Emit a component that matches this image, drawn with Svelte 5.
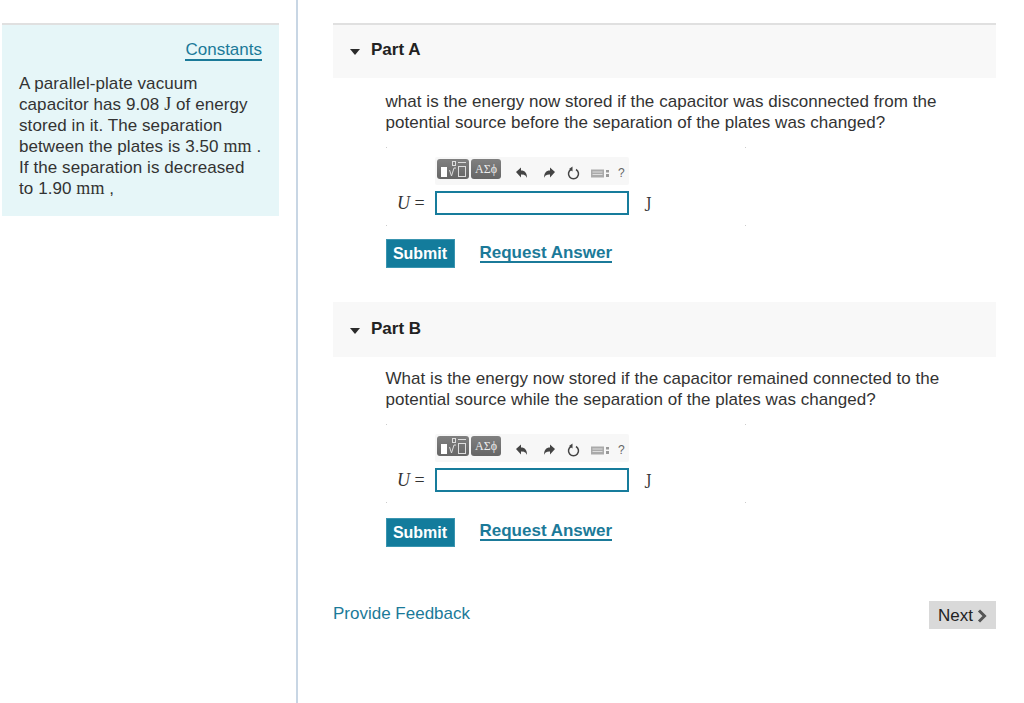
<script lang="ts">
	const parts = [
		{
			id: 'a',
			name: 'Part A',
			question: ['what is the energy now stored if the capacitor was disconnected from the', 'potential source before the separation of the plates was changed?'],
		},
		{
			id: 'b',
			name: 'Part B',
			question: ['What is the energy now stored if the capacitor remained connected to the', 'potential source while the separation of the plates was changed?'],
		},
	];
</script>

<div class="page">
	<aside class="side">
		<div class="info">
			<div class="constants"><a href="#c">Constants</a></div>
			<p class="intro">
				A parallel-plate vacuum<br />
				capacitor has 9.08 <span class="m">J</span> of energy<br />
				stored in it. The separation<br />
				between the plates is 3.50 <span class="m">mm</span> .<br />
				If the separation is decreased<br />
				to 1.90 <span class="m">mm</span> ,
			</p>
		</div>
	</aside>

	<main class="main">
		{#each parts as part}
			<section class="part part-{part.id}">
				<div class="part-head">
					<svg class="caret" width="10" height="6" viewBox="0 0 10 6"><path d="M0 0h10L5 6z" fill="#2b2b2b" /></svg>
					<span>{part.name}</span>
				</div>
				<div class="part-body">
					<p class="question">{part.question[0]}<br />{part.question[1]}</p>
					<div class="answer">
						<i class="dot tl"></i><i class="dot tr"></i><i class="dot bl"></i><i class="dot br"></i>
						<div class="toolbar">
							<span class="tool tool-tpl">
								<svg width="32" height="20" viewBox="0 0 32 20" fill="none">
									<rect x="4" y="8" width="6" height="10" fill="#fff" />
									<rect x="15.500" y="2.500" width="3" height="4" stroke="#ddd" />
									<path d="M12.500 11l2 6 2.500-8h2" stroke="#ddd" />
									<path d="M21 3.500h8" stroke="#ddd" />
									<rect x="21.500" y="7.500" width="7" height="10" stroke="#ddd" />
								</svg>
							</span>
							<span class="tool tool-sym">ΑΣϕ</span>
							<div class="actions">
								<svg class="undo" width="12" height="12" viewBox="0 0 12 12"><path d="M0 5l5-4.500v3c4 0 6 2.500 6 7.500-1.200-3-3-3.500-6-3.500v3z" fill="#444" /></svg>
								<svg class="redo" width="12" height="12" viewBox="0 0 12 12"><path d="M12 5L7 .5v3c-4 0-6 2.500-6 7.500 1.200-3 3-3.500 6-3.500v3z" fill="#444" /></svg>
								<svg class="redo-c" width="13" height="14" viewBox="0 0 13 14" fill="none"><path d="M4 3.500a5 5 0 1 0 5 0" stroke="#444" stroke-width="1.500" /><path d="M5.500 .5v5L2 3z" fill="#444" /></svg>
								<svg class="keys" width="18" height="9" viewBox="0 0 18 9"><rect width="13" height="8" y=".5" fill="#aaa" /><path d="M1.500 3h10M1.500 5.500h10" stroke="#ddd" /><path d="M15 1h3v2.500h-3zM15 5h3v3h-3z" fill="#999" /></svg>
								<span class="help">?</span>
							</div>
						</div>
						<div class="input-row">
							<span class="var"><em>U</em> =</span>
							<span class="input"></span>
							<span class="unit">J</span>
						</div>
					</div>
					<div class="buttons">
						<button class="submit">Submit</button>
						<a class="request" href="#r">Request Answer</a>
					</div>
				</div>
			</section>
		{/each}

		<div class="foot">
			<a href="#f">Provide Feedback</a>
			<button class="next">Next
				<svg width="10" height="14" viewBox="0 0 10 14" fill="none"><path d="M2 1.500L7.500 7 2 12.500" stroke="#555" stroke-width="3" /></svg>
			</button>
		</div>
	</main>
</div>

<style>
	:global(body) { margin: 0; background: #fff; font-family: "Liberation Sans", Arial, sans-serif; color: #333; }
	.page { display: flex; height: 703px; overflow: hidden; }
	.side { flex: 0 0 298px; box-sizing: border-box; padding: 23px 17px 0 2px; border-right: 2px solid #c8d6e4; }
	.info { background: #e6f6f8; border-top: 2px solid #e0e0e0; height: 191px; padding-left: 17px; }
	.constants { text-align: right; padding: 15px 17px 0 0; font-size: 17px; line-height: 20px; }
	.constants a { color: #1b7a99; text-decoration: none; border-bottom: 2px solid #1b7a99; }
	.intro { margin: 13px 0 0; font-size: 17px; line-height: 21px; letter-spacing: .08px; }
	.m { font-family: "Liberation Serif", serif; font-size: 18px; line-height: 1; }
	.main { flex: 1; padding: 23px 28px 0 35px; min-width: 0; }
	.part-head { display: flex; align-items: center; gap: 11px; padding-left: 17px; box-sizing: border-box; background: #f8f8f8; font-weight: bold; font-size: 17px; color: #222; }
	.part-a .part-head { height: 55px; padding-bottom: 4px; border-top: 2px solid #e0e0e0; }
	.part-b .part-head { height: 55px; padding-bottom: 2px; }
	.caret { margin-top: 4px; }
	.part-body { padding-left: 52.500px; }
	.part-a .part-body { padding-top: 13px; height: 211px; }
	.part-b .part-body { padding-top: 11px; height: 233px; }
	.question { margin: 0; font-size: 17px; line-height: 21px; letter-spacing: .04px; }
	.answer { position: relative; box-sizing: border-box; margin: 14px 0 0 -52.500px; height: 78px; padding: 10px 0 0 102px; }
	.dot { position: absolute; width: 1px; height: 1px; background: #ccc; }
	.tl { left: 53px; top: 0; } .tr { left: 412px; top: 0; } .bl { left: 53px; top: 78px; } .br { left: 412px; top: 78px; }
	.toolbar { display: flex; align-items: flex-start; gap: 2px; width: 194px; height: 28px; padding-left: 2px; box-sizing: border-box; background: #f7f7f7; border-radius: 2px; }
	.tool { display: flex; align-items: center; justify-content: center; height: 20px; margin-top: 2px; background: linear-gradient(#808080, #666); border-radius: 3px; color: #eee; font-family: "Liberation Serif", serif; font-size: 12px; }
	.tool-tpl { width: 32px; }
	.tool-sym { width: 30px; }
	.actions { display: flex; align-items: center; height: 12px; margin: 10px 0 0 0; }
	.undo { margin-left: 13px; }
	.redo { margin-left: 15px; }
	.redo-c { margin-left: 12px; }
	.keys { margin-left: 11px; }
	.help { margin-left: 9px; font-size: 12px; color: #666; }
	.input-row { display: flex; align-items: center; margin: 6px 0 0 -38px; }
	.var { width: 38px; font-family: "Liberation Serif", serif; font-size: 18px; color: #333; }
	.input { width: 194px; height: 24px; box-sizing: border-box; background: #fff; border: 2px solid #177c9c; }
	.unit { margin-left: 17px; font-family: "DejaVu Serif", serif; font-size: 14px; font-weight: 500; }
	.buttons { display: flex; align-items: center; gap: 25px; margin-top: 14px; }
	.part-b .buttons { margin-top: 16px; }
	.submit { width: 69px; height: 29px; padding: 0; border: 1px solid #3a95b0; background: #137c9c; color: #fff; font: bold 16px "Liberation Sans", Arial, sans-serif; }
	.request { color: #1b7a99; font-weight: bold; font-size: 17px; text-decoration: none; border-bottom: 2px solid #1b7a99; line-height: 17px; }
	.part-b .request { margin-top: -2px; }
	.foot { display: flex; align-items: center; justify-content: space-between; height: 28px; }
	.foot a { color: #1b7a99; font-size: 17px; text-decoration: none; margin-top: -2px; }
	.next { display: flex; align-items: center; gap: 4px; justify-content: center; width: 67px; height: 28px; padding: 2px 0 0; border: none; background: #d9d9d9; color: #222; font: 17px "Liberation Sans", Arial, sans-serif; }
</style>
